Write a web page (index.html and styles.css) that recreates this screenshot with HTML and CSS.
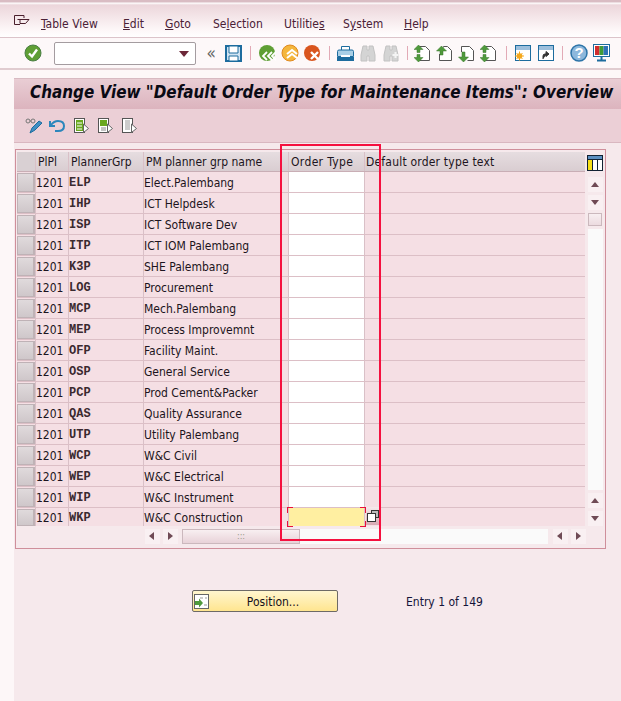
FILE: index.html
```html
<!DOCTYPE html>
<html lang="en">
<head>
<meta charset="utf-8">
<title>Change View</title>
<link rel="stylesheet" href="styles.css">
</head>
<body>
<header class="menubar">
  <svg class="menu-icon" width="16" height="12" viewBox="0 0 16 12"><path d="M.5 .5H10V3M.5 .5V9.500H6M3.500 4.500H15L11.500 8.500H6V4.500" fill="none" stroke="#4a1f2c"/></svg>
  <nav class="menu">
    <span class="m m-tv"><u>T</u>able View</span>
    <span class="m"><u>E</u>dit</span>
    <span class="m"><u>G</u>oto</span>
    <span class="m">Se<u>l</u>ection</span>
    <span class="m">Utilitie<u>s</u></span>
    <span class="m">S<u>y</u>stem</span>
    <span class="m"><u>H</u>elp</span>
  </nav>
</header>
<div class="toolbar">
  <svg class="check" width="18" height="18" viewBox="0 0 18 18"><circle cx="9" cy="9" r="8" fill="#5f9f35" stroke="#4a7f45"/><path d="M5 9.500L8 12.500L13 5.500" fill="none" stroke="#fff" stroke-width="2.400"/></svg>
  <div class="combo"><span class="combo-arrow"></span></div>
  <span class="ti chev">«</span>
  <span class="ti"><svg width="17" height="17" viewBox="0 0 17 17"><path d="M1 1H16V16H1Z" fill="#cfe3f2" stroke="#1d6c9e" stroke-width="2"/><path d="M4 1H13V8H4ZM4 11H13V16H4Z" fill="#fff" stroke="#1d6c9e"/></svg></span>
  <span class="sep"></span>
  <span class="ti"><svg width="18" height="18" viewBox="0 0 18 18"><circle cx="9" cy="9" r="8" fill="#5f9f35"/><path d="M9 8L5 12L9 16M14 8L10 12L14 16M18 8L14 12L18 16" fill="none" stroke="#fff" stroke-width="1.800"/></svg></span>
  <span class="ti"><svg width="18" height="18" viewBox="0 0 18 18"><circle cx="9" cy="9" r="8" fill="#f4b63c" stroke="#e08a20"/><path d="M6 10L11 6L16 10M6 14L11 10L16 14" fill="none" stroke="#fff" stroke-width="2"/></svg></span>
  <span class="ti"><svg width="18" height="18" viewBox="0 0 18 18"><circle cx="9" cy="9" r="8" fill="#d9551e"/><path d="M8 8L15 15M15 8L8 15" stroke="#fff" stroke-width="2.400"/></svg></span>
  <span class="sep"></span>
  <span class="ti"><svg width="17" height="17" viewBox="0 0 17 17"><path d="M4.500 5V1.500H12.500V5" fill="#fff" stroke="#1d6c9e"/><path d="M.5 6.500Q.5 5 2 5H15Q16.500 5 16.500 6.500V11.500H.5Z" fill="#a9cfe6" stroke="#1d6c9e"/><rect x="0" y="12" width="17" height="4" fill="#1d6c9e"/><rect x="4" y="10" width="9" height="2" fill="#fff"/></svg></span>
  <span class="ti"><svg width="16" height="17" viewBox="0 0 16 17"><path d="M3 1H7V5H9V1H13L15 10V16H9V11H7V16H1V10Z" fill="#d4d4d4" stroke="#c2c2c2"/></svg></span>
  <span class="ti"><svg width="16" height="17" viewBox="0 0 16 17"><path d="M3 1H7V5H9V1H13L15 10V16H9V11H7V16H1V10Z" fill="#d4d4d4" stroke="#c2c2c2"/><path d="M12.500 7V13M9.500 10H15.500" stroke="#f4f4f4" stroke-width="2"/></svg></span>
  <span class="sep sep-tight"></span>
  <span class="ti t22"><svg width="17" height="17" viewBox="0 0 17 17"><path d="M5.500 3.500V1.500H11.500L15.500 5.500V15.500H5.500V13" fill="#fff" stroke="#555"/><path d="M4.500 0L9 4.500H6V7.500H3V4.500H0ZM4.500 17L9 12.500H6V9.500H3V12.500H0Z" fill="#4f9a3c" stroke="#39752c" stroke-width=".5"/></svg></span>
  <span class="ti t22"><svg width="17" height="17" viewBox="0 0 17 17"><path d="M7.500 2.500V1.500H11.500L15.500 5.500V15.500H3.500V9" fill="#fff" stroke="#555"/><path d="M5.500 1L10.500 6H7V10H4V6H.5Z" fill="#4f9a3c" stroke="#39752c" stroke-width=".5"/></svg></span>
  <span class="ti t22"><svg width="17" height="17" viewBox="0 0 17 17"><path d="M3.500 7V1.500H11.500L15.500 5.500V15.500H9.500" fill="#fff" stroke="#555"/><path d="M5.500 17L.5 12H4V7H7V12H10.500Z" fill="#4f9a3c" stroke="#39752c" stroke-width=".5"/></svg></span>
  <span class="ti t22"><svg width="17" height="17" viewBox="0 0 17 17"><path d="M5.500 3.500V1.500H11.500L15.500 5.500V15.500H5.500V13" fill="#fff" stroke="#555"/><path d="M4.500 0L9 4.500H6V7.500H3V4.500H0ZM4.500 17L9 12.500H6V9.500H3V12.500H0Z" fill="#4f9a3c" stroke="#39752c" stroke-width=".5"/></svg></span>
  <span class="sep sep-loose"></span>
  <span class="ti"><svg width="16" height="16" viewBox="0 0 16 16"><rect x=".5" y=".5" width="15" height="15" fill="#fff" stroke="#1d6c9e"/><rect x="1" y="1" width="14" height="4" fill="#9dbfdc"/><circle cx="4.500" cy="11" r="2.800" fill="#f5a81c"/><path d="M4.500 6.500V15.500M0 11H9M1.500 8L7.500 14M7.500 8L1.500 14" stroke="#f5a81c"/></svg></span>
  <span class="ti"><svg width="16" height="16" viewBox="0 0 16 16"><rect x=".5" y=".5" width="15" height="15" fill="#fff" stroke="#1d6c9e"/><rect x="1" y="1" width="14" height="4" fill="#9dbfdc"/><path d="M5 14V11Q5 9 7 9H9M8 6.500L11 9L8 11.500Z" fill="#333" stroke="#333"/></svg></span>
  <span class="sep"></span>
  <span class="ti"><svg width="18" height="18" viewBox="0 0 18 18"><circle cx="9" cy="9" r="8" fill="#8db8dc" stroke="#2d74a8" stroke-width="1.500"/><text class="help-q" x="9" y="14" text-anchor="middle">?</text></svg></span>
  <span class="ti"><svg width="17" height="18" viewBox="0 0 17 18"><rect x=".5" y=".5" width="16" height="12" fill="#fff" stroke="#1d6c9e"/><rect x="2" y="2" width="4.500" height="9" fill="#d12d2d"/><rect x="6.500" y="2" width="4" height="9" fill="#3f9c37"/><rect x="10.500" y="2" width="4.500" height="9" fill="#2f72b5"/><path d="M8.500 13V16M4 16.500H13" stroke="#1d6c9e" stroke-width="2"/></svg></span>
</div>
<main class="content">
  <h1 class="title">Change View "Default Order Type for Maintenance Items": Overview</h1>
  <div class="apptools">
    <svg class="at at-first" width="18" height="16" viewBox="0 0 18 16"><circle cx="3" cy="3" r="2" fill="none" stroke="#777"/><circle cx="8" cy="3" r="2" fill="none" stroke="#777"/><path d="M5 3H6" stroke="#777"/><path d="M5 15L7 10L14 3L17 5L10 12Z" fill="#3f8fc4" stroke="#1d6c9e"/></svg>
    <svg class="at" width="16" height="14" viewBox="0 0 16 14"><path d="M1 2V7H6M2 6Q5 2 9 2Q15 2 15 7Q15 12 9 12H6" fill="none" stroke="#2b86bc" stroke-width="2"/></svg>
    <svg class="at" width="15" height="16" viewBox="0 0 15 16"><rect x=".5" y=".5" width="10" height="14" fill="#fff" stroke="#555"/><rect x="2" y="2" width="7" height="11" fill="#6aa820"/><path d="M3 5H8M3 8H8M3 11H8" stroke="#fff"/><path d="M9.500 6L14.500 10.500L9.500 14.500Z" fill="#fff" stroke="#666"/></svg>
    <svg class="at" width="15" height="16" viewBox="0 0 15 16"><rect x=".5" y=".5" width="10" height="14" fill="#fff" stroke="#555"/><rect x="2" y="2" width="7" height="6" fill="#6aa820"/><path d="M3 10H8M3 12H8" stroke="#888"/><path d="M9.500 6L14.500 10.500L9.500 14.500Z" fill="#fff" stroke="#666"/></svg>
    <svg class="at" width="15" height="16" viewBox="0 0 15 16"><rect x=".5" y=".5" width="10" height="14" fill="#fff" stroke="#555"/><path d="M3 3H8M3 5H8M3 7H8M3 9H8M3 11H8" stroke="#999"/><path d="M9.500 6L14.500 10.500L9.500 14.500Z" fill="#fff" stroke="#666"/></svg>
  </div>
  <section class="box">
    <div class="tablewrap">
      <div class="table">
        <div class="row head">
          <span class="sel-h"></span>
          <span class="c">PlPl</span>
          <span class="c">PlannerGrp</span>
          <span class="c">PM planner grp name</span>
          <span class="c wide">Order Type</span>
          <span class="c wide wide-text">Default order type text</span>
        </div>
        <div class="row"><span class="sel"></span><span class="c num">1201</span><span class="c code">ELP</span><span class="c">Elect.Palembang</span><span class="inp"></span><span class="c"></span></div>
        <div class="row"><span class="sel"></span><span class="c num">1201</span><span class="c code">IHP</span><span class="c">ICT Helpdesk</span><span class="inp"></span><span class="c"></span></div>
        <div class="row"><span class="sel"></span><span class="c num">1201</span><span class="c code">ISP</span><span class="c">ICT Software Dev</span><span class="inp"></span><span class="c"></span></div>
        <div class="row"><span class="sel"></span><span class="c num">1201</span><span class="c code">ITP</span><span class="c">ICT IOM Palembang</span><span class="inp"></span><span class="c"></span></div>
        <div class="row"><span class="sel"></span><span class="c num">1201</span><span class="c code">K3P</span><span class="c">SHE Palembang</span><span class="inp"></span><span class="c"></span></div>
        <div class="row"><span class="sel"></span><span class="c num">1201</span><span class="c code">LOG</span><span class="c">Procurement</span><span class="inp"></span><span class="c"></span></div>
        <div class="row"><span class="sel"></span><span class="c num">1201</span><span class="c code">MCP</span><span class="c">Mech.Palembang</span><span class="inp"></span><span class="c"></span></div>
        <div class="row"><span class="sel"></span><span class="c num">1201</span><span class="c code">MEP</span><span class="c">Process Improvemnt</span><span class="inp"></span><span class="c"></span></div>
        <div class="row"><span class="sel"></span><span class="c num">1201</span><span class="c code">OFP</span><span class="c">Facility Maint.</span><span class="inp"></span><span class="c"></span></div>
        <div class="row"><span class="sel"></span><span class="c num">1201</span><span class="c code">OSP</span><span class="c">General Service</span><span class="inp"></span><span class="c"></span></div>
        <div class="row"><span class="sel"></span><span class="c num">1201</span><span class="c code">PCP</span><span class="c">Prod Cement&amp;Packer</span><span class="inp"></span><span class="c"></span></div>
        <div class="row"><span class="sel"></span><span class="c num">1201</span><span class="c code">QAS</span><span class="c">Quality Assurance</span><span class="inp"></span><span class="c"></span></div>
        <div class="row"><span class="sel"></span><span class="c num">1201</span><span class="c code">UTP</span><span class="c">Utility Palembang</span><span class="inp"></span><span class="c"></span></div>
        <div class="row"><span class="sel"></span><span class="c num">1201</span><span class="c code">WCP</span><span class="c">W&amp;C Civil</span><span class="inp"></span><span class="c"></span></div>
        <div class="row"><span class="sel"></span><span class="c num">1201</span><span class="c code">WEP</span><span class="c">W&amp;C Electrical</span><span class="inp"></span><span class="c"></span></div>
        <div class="row"><span class="sel"></span><span class="c num">1201</span><span class="c code">WIP</span><span class="c">W&amp;C Instrument</span><span class="inp"></span><span class="c"></span></div>
        <div class="row last"><span class="sel"></span><span class="c num">1201</span><span class="c code">WKP</span><span class="c">W&amp;C Construction</span><span class="inp focus"><i class="br tl"></i><i class="br tr"></i><i class="br bl"></i><i class="br br2"></i></span><span class="c"><span class="f4"><svg width="12" height="12" viewBox="0 0 12 12"><rect x="4.500" y=".5" width="7" height="7" fill="#bbb" stroke="#333"/><rect x=".5" y="3.500" width="8" height="8" fill="#fff" stroke="#333"/></svg></span></span></div>
      </div>
      <aside class="vscroll">
        <span class="cfg"><svg width="16" height="16" viewBox="0 0 16 16"><rect width="16" height="16" fill="#123"/><rect x="1" y="1" width="14" height="3" fill="#5b8fc0"/><rect x="1" y="5" width="4" height="10" fill="#f7e017"/><rect x="6" y="5" width="4" height="10" fill="#fff"/><rect x="11" y="5" width="4" height="10" fill="#fff"/></svg></span>
        <span class="sb up"></span>
        <span class="sb down"></span>
        <span class="vthumb"></span>
        <span class="vtrack"></span>
        <span class="sb up"></span>
        <span class="sb down"></span>
      </aside>
    </div>
    <div class="hscroll">
      <span class="sb left"></span>
      <span class="sb right"></span>
      <span class="hthumb">:::</span>
      <span class="htrack"></span>
      <span class="sb left"></span>
      <span class="sb right"></span>
    </div>
  </section>
  <div class="actions">
    <button class="pos" type="button">
      <svg class="pos-icon" width="15" height="15" viewBox="0 0 15 15"><rect x=".5" y=".5" width="14" height="14" fill="#fff" stroke="#666"/><path d="M6 4H9M11 4H13M10 11H13" stroke="#999"/><path d="M1 7H5V4.500L9 9L5 13.500V11H1Z" fill="#4f9a3c"/></svg>
      <span>Position...</span>
    </button>
    <span class="entry">Entry 1 of 149</span>
  </div>
</main>
<div class="annot"></div>
</body>
</html>
```
FILE: styles.css
```css
* { box-sizing: border-box; }
html, body { margin: 0; padding: 0; }
body {
  position: relative;
  width: 621px;
  height: 701px;
  overflow: hidden;
  background: #fdf7f8;
  font-family: "DejaVu Sans", sans-serif;
  font-stretch: condensed;
  font-size: 12px;
  color: #1c1420;
}
.menubar {
  height: 38px;
  display: flex;
  align-items: center;
  padding: 11px 0 0 14px;
  background: linear-gradient(#d9bcc3 0, #d9bcc3 2px, #fff 3px, #ecd6db 5px, #fdf7f8 30px, #fff 37px);
  border-bottom: 1px solid #dcc4ca;
}
.menu-icon { margin-top: -7px; flex: none; }
.menu {
  display: grid;
  grid-template-columns: 82px 42px 48px 71px 59px 61px auto;
  margin-left: 11px;
}
.m { color: #4a2136; font-size: 12px; white-space: nowrap; }
.toolbar {
  height: 32px;
  display: flex;
  align-items: center;
  padding-left: 24px;
  border-bottom: 2px solid #e0ccd0;
  background: #fdf8f9;
}
.check { margin-right: 12px; }
.combo {
  width: 142px;
  height: 23px;
  background: #fff;
  border: 1px solid #a49ca0;
  border-radius: 2px;
  position: relative;
  margin-right: 4px;
}
.combo-arrow {
  position: absolute;
  right: 6px;
  top: 8px;
  border-left: 5px solid transparent;
  border-right: 5px solid transparent;
  border-top: 6px solid #6c2738;
}
.ti { width: 22.5px; display: flex; justify-content: center; align-items: center; }
.t22 { width: 22px; }
.chev { color: #666; font-size: 17px; }
.sep { width: 11px; display: flex; justify-content: center; }
.sep-tight { margin-right: -2px; }
.sep-loose { margin-left: 2px; }
.sep::before { content: ""; width: 1px; height: 14px; background: #e2aab6; }
.content {
  margin: 8px 0 0 14px;
  height: 631px;
  background: #f6e9ec;
  border-top: 1px solid #d8bac2;
}
.title {
  margin: 0;
  height: 30px;
  padding: 0 0 0 16px;
  line-height: 27px;
  font-size: 16.9px;
  font-style: italic;
  font-weight: 700;
  color: #0a0a14;
  white-space: nowrap;
  background: linear-gradient(#e9cdd4, #dcb4be);
  overflow: hidden;
}
.apptools {
  height: 34px;
  display: flex;
  align-items: center;
  gap: 9px;
  padding-left: 11px;
  background: #ebcfd6;
  border-bottom: 1px solid #d9b7c0;
}
.at { flex: none; }
.at-first { margin-right: -3px; }
.box {
  width: 591px;
  height: 400px;
  margin: 6px 0 0 1px;
  border: 1px solid #cf8f9b;
  background: #f6e9ec;
}
.tablewrap { display: flex; height: 376px; padding: 2px 0 0 1px; }
.table { width: 568px; }
.row {
  display: grid;
  grid-template-columns: 18px 33px 75px 145px 76px 221px;
  grid-template-rows: minmax(0, 1fr);
  height: 21px;
  background: #f5dfe4;
  border-bottom: 1px solid #dcbfc6;
  line-height: 19px;
}
.row .c { padding-top: 2px; }
.row.last { height: 18px; border-bottom: 0; }
.row.last .c { padding-top: 1px; }
.head {
  height: 20px;
  background: linear-gradient(#e6dde0, #d9cdd1);
  border-bottom: 1px solid #c9aeb5;
}
.row.head .c { padding: 1px 0 0 2px; }
.row.head .wide { letter-spacing: .35px; }
.row.head .wide-text { padding-left: 1px; letter-spacing: .2px; }
.c {
  border-left: 1px solid #d9c0c7;
  white-space: nowrap;
  position: relative;
}
.sel-h { background: #d9d0d3; }
.sel {
  margin: 1px 0 0 0;
  background: linear-gradient(#e0dadc, #cfc7ca);
  border: 1px solid #bfb2b6;
  border-width: 1px 2px 1px 1px;
}
.code { font-family: "Liberation Mono", monospace; font-size: 12px; font-weight: 700; color: #3b2a30; }
.inp {
  background: #fff;
  border-left: 1px solid #d9c0c7;
  position: relative;
}
.inp.focus { background: #ffefa1; }
.br { position: absolute; width: 6px; height: 6px; border: 0 solid #e8103c; }
.tl { left: -2px; top: -1px; border-width: 1px 0 0 1px; }
.tr { right: -2px; top: -1px; border-width: 1px 1px 0 0; }
.bl { left: -2px; bottom: -1px; border-width: 0 0 1px 1px; }
.br2 { right: -2px; bottom: -1px; border-width: 0 1px 1px 0; }
.f4 {
  position: absolute;
  left: 1px;
  top: -1px;
  width: 14px;
  height: 18px;
  display: flex;
  align-items: center;
  justify-content: center;
  background: linear-gradient(#f5eaec, #d8a8b2);
}
.vscroll { width: 20px; display: flex; flex-direction: column; align-items: center; gap: 3px; }
.cfg { height: 18px; display: flex; align-items: center; margin-top: 2px; margin-bottom: 2px; }
.sb { width: 15px; height: 15px; background: #f9f0f2; position: relative; flex: none; }
.sb::after { content: ""; position: absolute; border: 0 solid transparent; }
.up::after { left: 3px; top: 5px; border-width: 0 4px 5px; border-bottom-color: #6f4a55; }
.down::after { left: 3px; top: 5px; border-width: 5px 4px 0; border-top-color: #6f4a55; }
.left::after { left: 4px; top: 3px; border-width: 4px 5px 4px 0; border-right-color: #6f4a55; }
.right::after { left: 5px; top: 3px; border-width: 4px 0 4px 5px; border-left-color: #6f4a55; }
.vthumb { width: 14px; height: 13px; flex: none; background: linear-gradient(#f8eff1, #ecdbe0); border: 1px solid #cbb8bd; }
.vtrack { width: 15px; flex: 1; background: #fafafa; }
.hscroll { display: flex; align-items: center; gap: 3px; padding-left: 129px; height: 20px; }
.hscroll .sb:nth-child(5) { margin-left: 2px; }
.hthumb {
  width: 118px;
  height: 15px;
  margin-left: 1px;
  text-align: center;
  line-height: 13px;
  font-size: 9px;
  color: #998;
  background: linear-gradient(#f8eff1, #e8d2d8);
  border: 1px solid #cbb8bd;
  flex: none;
}
.htrack { width: 248px; height: 15px; margin-left: -3px; background: #fafafa; flex: none; }
.actions { display: flex; align-items: center; margin: 41px 0 0 178px; height: 22px; }
.pos {
  width: 146px;
  height: 22px;
  padding: 0;
  display: flex;
  align-items: center;
  border: 1px solid #6d6a66;
  border-radius: 2px;
  background: linear-gradient(#fff6cf, #ffe58f);
  font: inherit;
  color: #14101a;
}
.pos-icon { margin-left: 1px; }
.pos span { flex: 1; text-align: center; padding-top: 1px; }
.entry { margin-left: 68px; padding-top: 2px; color: #14143a; }
.annot {
  position: absolute;
  left: 280px;
  top: 144px;
  width: 101px;
  height: 397px;
  border: 2px solid #f5103f;
  pointer-events: none;
}
.help-q { font-family: "Liberation Sans", sans-serif; font-size: 15px; font-weight: 700; fill: #fff; }
```
